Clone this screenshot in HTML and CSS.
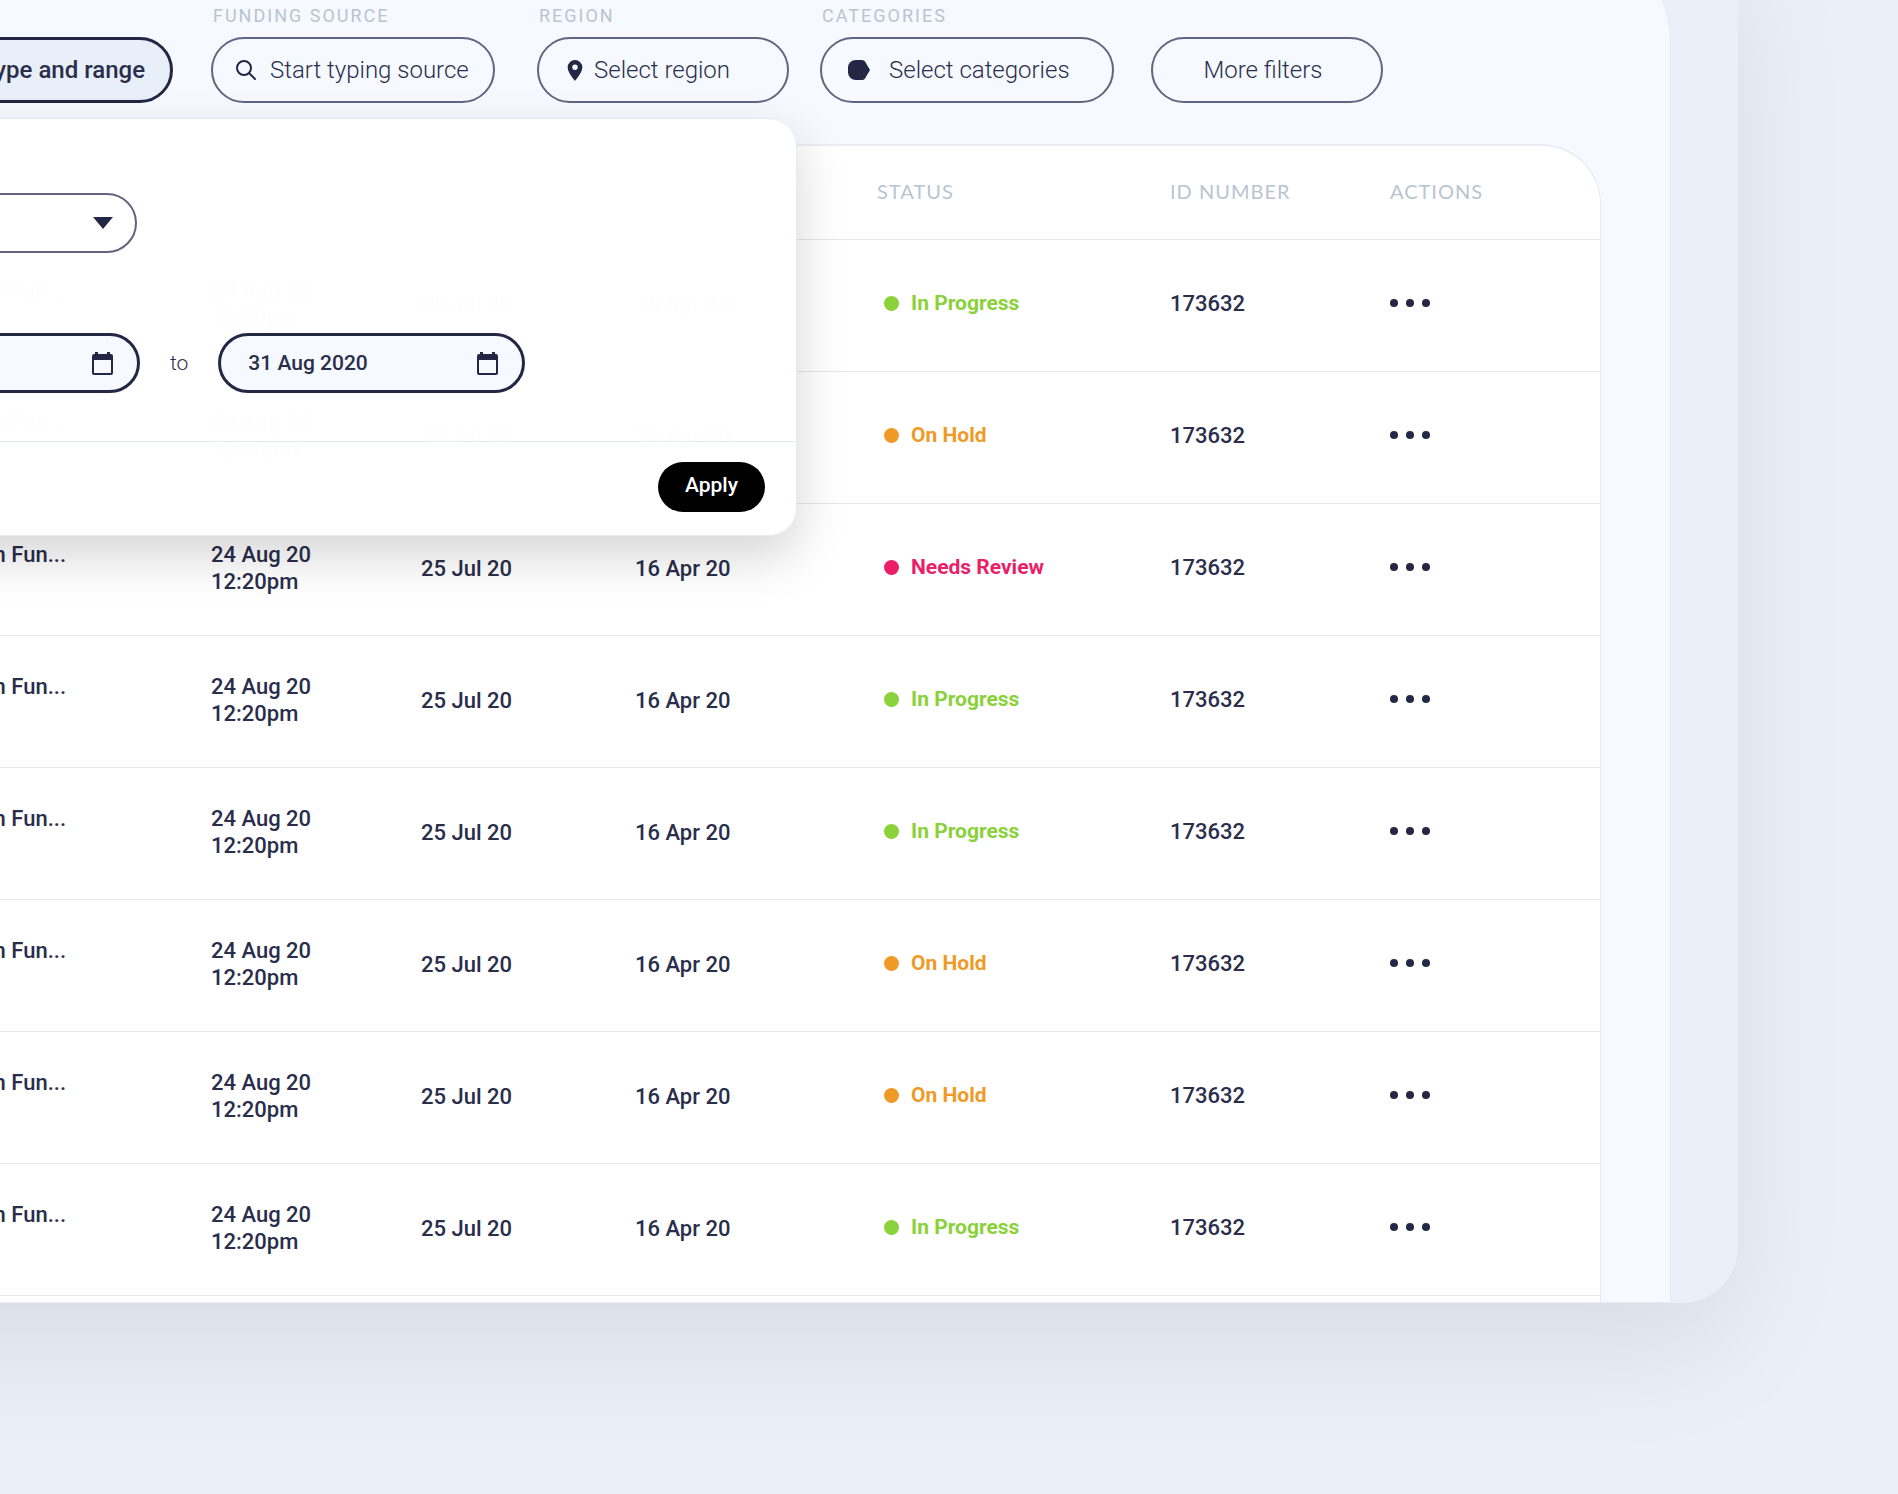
FILE: index.html
```html
<!DOCTYPE html>
<html lang="en">
<head>
  <meta charset="UTF-8">
  <meta name="viewport" content="width=device-width, initial-scale=1.0">
  <title>Funding applications</title>
  <link rel="stylesheet" href="styles.css">
</head>
<body>
  <div class="frame">
    <main class="panel">

      <!-- Filters -->
      <form class="filters">
        <div class="filter">
          <button type="button" class="pill pill-active">Select type and range</button>
        </div>
        <div class="filter">
          <label for="source">FUNDING SOURCE</label>
          <div class="pill pill-source">
            <svg class="icon-search" viewBox="0 0 20 20" width="20" height="20">
              <circle cx="8" cy="8" r="7" fill="none" stroke="#232744" stroke-width="2"/>
              <path d="M13 13l6 6" stroke="#232744" stroke-width="2" stroke-linecap="round"/>
            </svg>
            <input id="source" type="text" placeholder="Start typing source">
          </div>
        </div>
        <div class="filter">
          <label for="region">REGION</label>
          <div class="pill pill-region">
            <svg class="icon-pin" viewBox="0 0 14 20" width="16" height="21">
              <path fill="#232744" fill-rule="evenodd" d="M7 0a7 7 0 0 0-7 7c0 5.200 7 13 7 13s7-7.800 7-13a7 7 0 0 0-7-7zm0 9.600a2.600 2.600 0 1 1 0-5.200 2.600 2.600 0 0 1 0 5.200z"/>
            </svg>
            <select id="region"><option>Select region</option></select>
          </div>
        </div>
        <div class="filter">
          <label for="categories">CATEGORIES</label>
          <div class="pill pill-categories">
            <svg class="icon-tag" viewBox="0 0 22 20" width="22" height="20">
              <path fill="#232744" d="M8 0h6q2 0 3 1.500L22 10l-5 8.500Q16 20 14 20H8Q4.500 20 2.200 17.800 0 15.500 0 12.500v-5Q0 4.500 2.200 2.200 4.500 0 8 0z"/>
            </svg>
            <select id="categories"><option>Select categories</option></select>
          </div>
        </div>
        <div class="filter">
          <button type="button" class="pill pill-more">More filters</button>
        </div>
      </form>

      <!-- Applications -->
      <div class="card">
        <table>
          <colgroup>
            <col class="col-name">
            <col class="col-deadline">
            <col class="col-conf">
            <col class="col-review">
            <col class="col-status">
            <col class="col-id">
            <col>
          </colgroup>
          <thead>
            <tr>
              <th></th>
              <th>DEADLINE</th>
              <th>CONF DATE</th>
              <th>REVIEW DATE</th>
              <th>STATUS</th>
              <th>ID NUMBER</th>
              <th>ACTIONS</th>
            </tr>
          </thead>
          <tbody id="rows"></tbody>
        </table>
      </div>

      <!-- Type and range menu -->
      <form class="popover">
        <div class="popover-body">
          <div class="field field-select">
            <select aria-label="Date type"><option>Deadline</option></select>
            <svg viewBox="0 0 20 12" width="20" height="12"><path fill="#232744" d="M0 0h20L10 12z"/></svg>
          </div>
          <div class="range">
            <div class="field field-date field-from">
              <input type="text" value="1 Aug 2020" aria-label="From">
              <svg viewBox="0 0 21 23" width="21" height="23"><path fill="#232744" fill-rule="evenodd" d="M3 0h3v2h9V0h3v2h1q2 0 2 2v17q0 2-2 2H2q-2 0-2-2V4q0-2 2-2h1zM2 8v13h17V8z"/></svg>
            </div>
            <span class="to">to</span>
            <div class="field field-date">
              <input type="text" value="31 Aug 2020" aria-label="To">
              <svg viewBox="0 0 21 23" width="21" height="23"><path fill="#232744" fill-rule="evenodd" d="M3 0h3v2h9V0h3v2h1q2 0 2 2v17q0 2-2 2H2q-2 0-2-2V4q0-2 2-2h1zM2 8v13h17V8z"/></svg>
            </div>
          </div>
        </div>
        <div class="popover-footer">
          <button type="button" class="btn-apply">Apply</button>
        </div>
      </form>

    </main>
  </div>

  <script>
    const statuses = [
      'In Progress', 'On Hold', 'Needs Review', 'In Progress',
      'In Progress', 'On Hold', 'On Hold', 'In Progress'
    ];
    const tbody = document.getElementById('rows');

    statuses.forEach(status => {
      const row = document.createElement('tr');
      const name = status.toLowerCase().replace(' ', '-');
      row.innerHTML = `
        <td class="name">Education Fun...</td>
        <td>24 Aug 20<br>12:20pm</td>
        <td>25 Jul 20</td>
        <td>16 Apr 20</td>
        <td class="raised"><span class="status ${name}">${status}</span></td>
        <td class="raised">173632</td>
        <td class="raised">
          <button type="button" class="actions" aria-label="Actions"><i></i><i></i><i></i></button>
        </td>
      `;
      tbody.appendChild(row);
    });
  </script>
</body>
</html>
```
FILE: styles.css
```css
* {
  box-sizing: border-box;
}

body {
  margin: 0;
  min-height: 100vh;
  overflow-x: hidden;
  background-color: #eaeff8;
  color: #2a2e4b;
  font-family: Roboto, "Liberation Sans", sans-serif;
  font-size: 22px;
  line-height: 27px;
}

button, input, select {
  font: inherit;
  color: inherit;
  background: none;
  border: none;
  padding: 0;
  margin: 0;
  outline: none;
  appearance: none;
}

button {
  cursor: pointer;
}

/* the window runs past the top and left of the page */
.frame {
  margin: -68px 160px 0 -200px;
  padding-right: 67px;
  background-color: #ebf0f8;
  border-radius: 0 0 56px 0;
  box-shadow: 0 46px 120px rgba(0, 0, 0, 0.08);
}

.panel {
  position: relative;
  padding: 76px 69px 0 0;
  background-color: #f6f9ff;
  border-right: 1px solid #e6ebf2;
  border-bottom: 1px solid #e6ebf2;
  border-radius: 0 110px 0 0;
}

/* Filters */
.filters {
  display: grid;
  grid-template-columns: 380px 295px 252px 300px 232px;
  column-gap: 31px;
  align-items: end;
  padding-bottom: 41px;
}

.filter label {
  display: block;
  margin-bottom: 13px;
  padding-left: 2px;
  color: #b9c4d0;
  font-size: 18px;
  line-height: 16px;
  letter-spacing: 2px;
}

.pill {
  display: flex;
  align-items: center;
  width: 100%;
  height: 66px;
  border: 2px solid #62657f;
  border-radius: 33px;
  font-size: 24px;
  font-weight: 300;
}

.pill input,
.pill select {
  flex: 1;
  min-width: 0;
  height: 100%;
}

.pill input::placeholder {
  color: inherit;
  opacity: 1;
}

.pill-active {
  justify-content: flex-end;
  width: 373px;
  padding-right: 25px;
  background-color: #e8eff8;
  border: 3px solid #232744;
  font-weight: 500;
}

.pill-source {
  width: 284px;
  padding-left: 23px;
  gap: 14px;
}

.pill-region {
  padding-left: 28px;
  gap: 11px;
}

.pill-categories {
  width: 294px;
  padding-left: 26px;
  gap: 19px;
}

.pill-more {
  justify-content: center;
  padding-right: 8px;
}

/* Table */
.card {
  padding-bottom: 6px;
  overflow: hidden;
  background-color: #fff;
  border-top: 2px solid #e9eef5;
  border-right: 1px solid #e6eaf2;
  border-radius: 0 60px 0 0;
}

table {
  width: 100%;
  table-layout: fixed;
  border-collapse: collapse;
}

.col-name { width: 411px; }
.col-deadline { width: 210px; }
.col-conf { width: 214px; }
.col-review { width: 242px; }
.col-status { width: 293px; }
.col-id { width: 220px; }

th, td {
  padding: 0 0 2px;
  text-align: left;
  border-bottom: 1px solid #e3e9f1;
}

th {
  height: 93px;
  color: #b9c4d0;
  font-family: Lato, "Liberation Sans", sans-serif;
  font-size: 20px;
  font-weight: 400;
  letter-spacing: 1px;
}

td {
  height: 132px;
  font-weight: 500;
}

.name {
  padding: 0 145px 30px 0;
  text-align: right;
}

.raised {
  padding-bottom: 4px;
}

.status {
  display: flex;
  align-items: center;
  gap: 12px;
  padding-left: 7px;
  font-size: 21px;
  font-weight: 700;
}

.status::before {
  content: "";
  width: 15px;
  height: 15px;
  border-radius: 50%;
  background-color: currentColor;
}

.in-progress { color: #8ad13a; }
.on-hold { color: #ef9a26; }
.needs-review { color: #ea1f68; }

.actions {
  display: flex;
  gap: 8px;
}

.actions i {
  width: 8px;
  height: 8px;
  border-radius: 50%;
  background-color: #232744;
}

/* Popover */
.popover {
  position: absolute;
  top: 186px;
  left: 0;
  width: 997px;
  background-color: rgba(255, 255, 255, 0.992);
  border: 1px solid #e6eaf3;
  border-radius: 0 28px 28px 0;
  box-shadow: 0 20px 50px rgba(0, 0, 0, 0.17);
  font-size: 21px;
}

.popover-body {
  padding: 74px 0 48px;
}

.field {
  display: flex;
  align-items: center;
  justify-content: space-between;
  width: 307px;
  height: 60px;
  padding: 0 24px 0 27px;
  border: 3px solid #232744;
  border-radius: 30px;
  background-color: #f6f9ff;
  font-weight: 500;
}

.field input,
.field select {
  flex: 1;
  min-width: 0;
}

.field-select {
  width: 336px;
  margin-bottom: 80px;
  padding-right: 22px;
  border: 2px solid #62657f;
  background-color: #fff;
}

.range {
  display: flex;
  align-items: center;
  gap: 30px;
}

.field-from {
  width: 339px;
}

.to {
  font-weight: 300;
}

.popover-footer {
  display: flex;
  justify-content: flex-end;
  padding: 20px 31px 23px;
  border-top: 1px solid #e6eaf3;
}

.btn-apply {
  width: 107px;
  height: 50px;
  padding-bottom: 3px;
  border-radius: 25px;
  background-color: #000;
  color: #fff;
  font-weight: 500;
}
```
